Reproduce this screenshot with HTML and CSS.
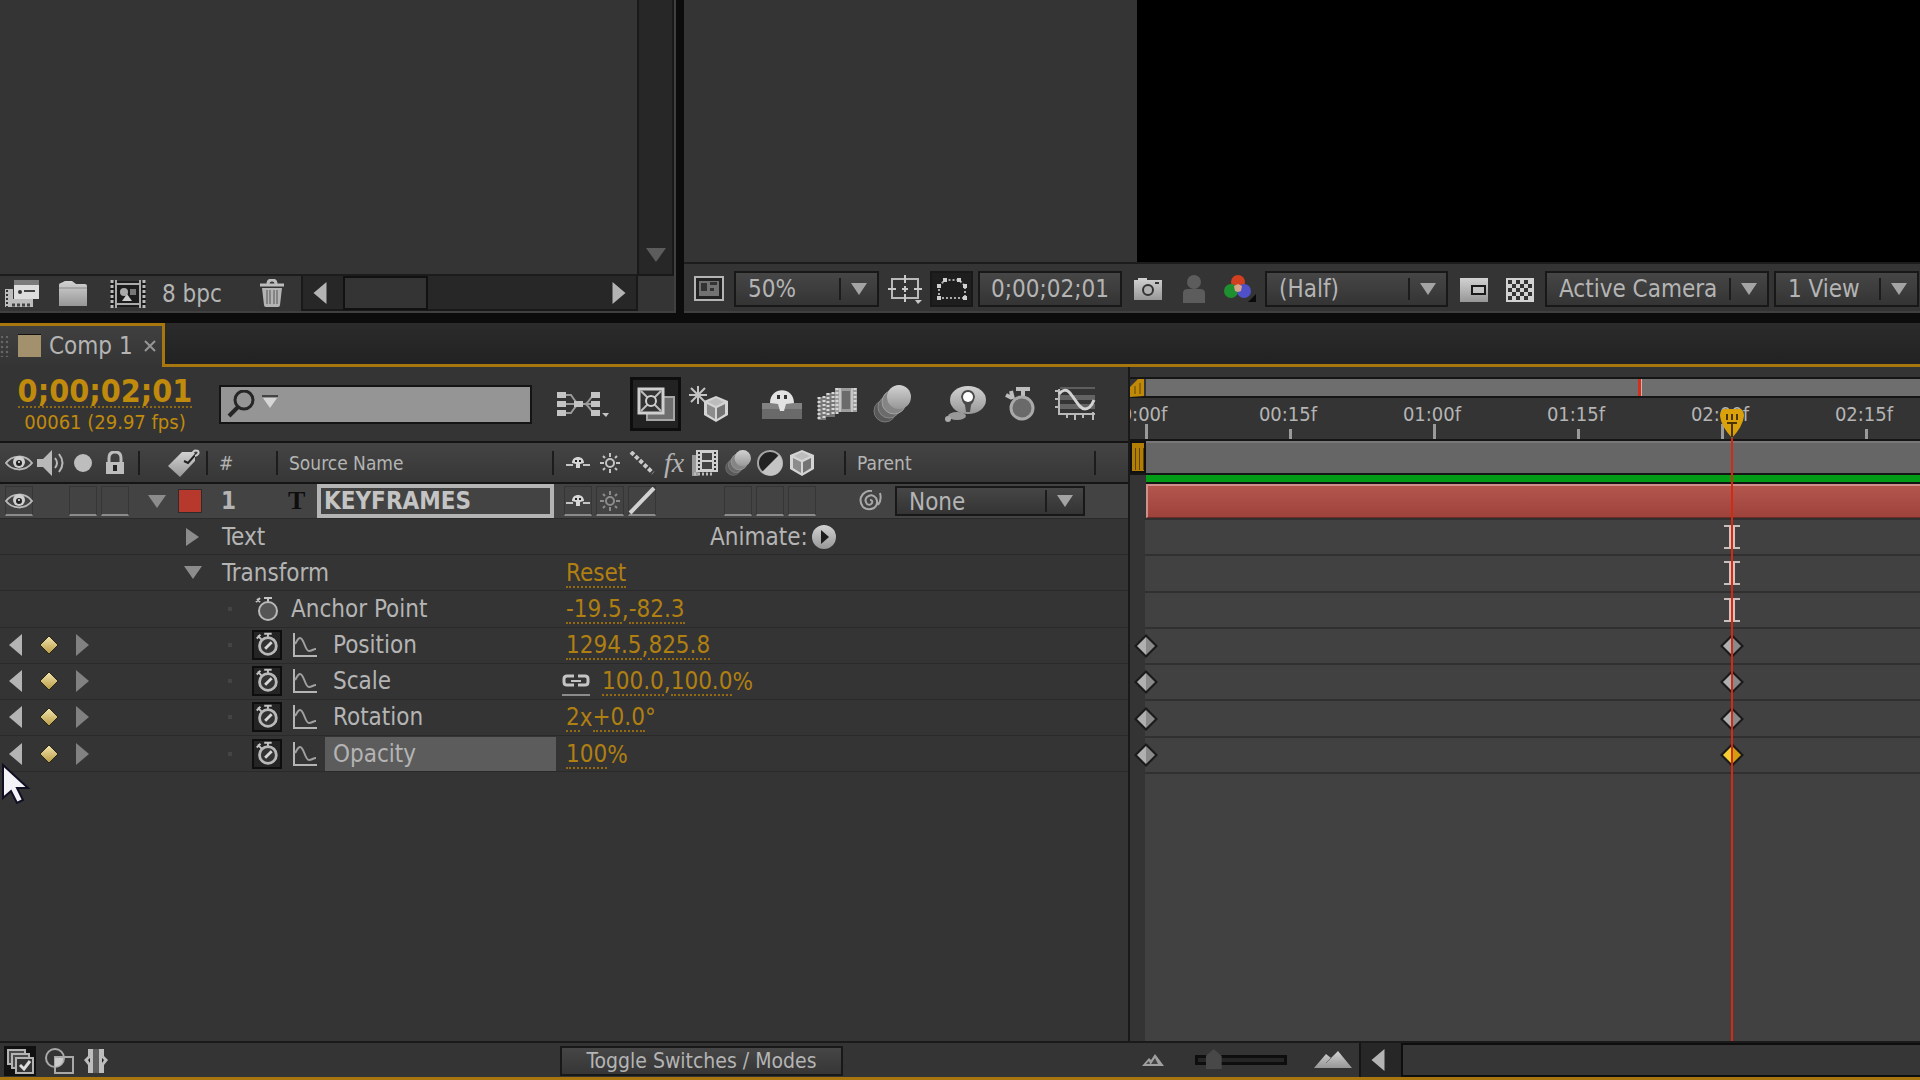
FILE: index.html
```html
<!DOCTYPE html>
<html lang="en">
<head>
  <meta charset="utf-8">
  <title>Comp 1</title>
  <link rel="stylesheet" href="styles.css">
</head>
<body>
  <!-- shared icons -->
  <svg class="sprite" aria-hidden="true">
    <defs>
      <linearGradient id="silver" x1="0" y1="0" x2="0" y2="1">
        <stop offset="0" stop-color="#d2d2d2"/><stop offset="1" stop-color="#979797"/>
      </linearGradient>
      <linearGradient id="gold" x1="0" y1="0" x2="0" y2="1">
        <stop offset="0" stop-color="#f3e6b0"/><stop offset="1" stop-color="#b89a42"/>
      </linearGradient>
    </defs>
    <symbol id="arrow-down" viewBox="0 0 16 12"><path d="M0 0h16L8 12z" fill="#a4a4a4"/></symbol>
    <symbol id="arrow-left" viewBox="0 0 13 22"><path d="M13 0v22L0 11z" fill="#b4b4b4"/></symbol>
    <symbol id="arrow-right" viewBox="0 0 13 22"><path d="M0 0v22l13-11z" fill="#b4b4b4"/></symbol>
    <symbol id="eye" viewBox="0 0 28 18">
      <path d="M1 9C7 1 20 0 27 9 20 18 7 17 1 9z" fill="none" stroke="#b9b9b9" stroke-width="2"/>
      <circle cx="14" cy="8" r="6" fill="#d0d0d0"/><circle cx="14" cy="9" r="3" fill="#222"/><circle cx="14" cy="8" r="1" fill="#eee"/>
    </symbol>
    <symbol id="shy" viewBox="0 0 24 14">
      <path d="M0 9h7M17 9h7" stroke="#c4c4c4" stroke-width="2"/>
      <path d="M6 7c0-8 12-8 12 0l-4 1v4h-4V8z" fill="#d6d6d6"/><path d="M9 4h2v2H9zM13 4h2v2h-2z" fill="#222"/>
    </symbol>
    <symbol id="sun" viewBox="0 0 20 20">
      <path d="M10 0v4M10 16v4M0 10h4M16 10h4M3 3l2 2M15 15l2 2M17 3l-2 2M5 15l-2 2" stroke="currentColor" stroke-width="2"/>
      <circle cx="10" cy="10" r="4" fill="none" stroke="currentColor" stroke-width="2"/>
    </symbol>
    <symbol id="cube" viewBox="0 0 24 26">
      <path d="M12 0l12 5v14l-12 7-12-7V5z" fill="#d4d4d4"/>
      <path d="M3 8l8 4v11l-8-5z" fill="#8c8c8c"/><path d="M21 8l-8 4v11l8-5z" fill="#737373"/><path d="M12 2l8 4-8 4-8-4z" fill="#bcbcbc"/>
    </symbol>
    <symbol id="blur" viewBox="0 0 38 38">
      <circle cx="12" cy="26" r="11" fill="#585858" stroke="#797979"/><circle cx="16" cy="22" r="11" fill="#6b6b6b" stroke="#898989"/>
      <circle cx="21" cy="17" r="12" fill="#858585" stroke="#a2a2a2"/><circle cx="26" cy="12" r="12" fill="url(#silver)"/>
    </symbol>
    <symbol id="stopwatch" viewBox="0 0 30 30">
      <path d="M12 4h8M16 4v4M5 5l3 3M4 8l4-4" stroke="#c4c4c4" stroke-width="2"/>
      <circle cx="16" cy="17" r="9" fill="#555" stroke="#b9b9b9" stroke-width="2"/>
    </symbol>
    <symbol id="stopwatch-on" viewBox="0 0 30 30">
      <path d="M12 3h8M16 3v4M5 5l4 4M4 8l4-4" stroke="#c4c4c4" stroke-width="2"/>
      <circle cx="16" cy="16" r="9" fill="#333" stroke="#b9b9b9" stroke-width="3"/>
      <path d="M13 19l7-7" stroke="#d8d8d8" stroke-width="3"/>
    </symbol>
    <symbol id="curve" viewBox="0 0 24 26">
      <path d="M1 1v23h23" fill="none" stroke="#b4b4b4" stroke-width="2"/>
      <path d="M2 12c2-3 3-6 5-6 4 0 5 13 9 13 3 0 4-2 7-2" fill="none" stroke="#a0a0a0" stroke-width="2"/>
    </symbol>
    <symbol id="diamond" viewBox="0 0 20 20"><path d="M10 1l9 9-9 9-9-9z" fill="url(#gold)" stroke="#29261a" stroke-width="1"/></symbol>
    <symbol id="keyframe" viewBox="0 0 24 24">
      <path d="M12 0l12 12-12 12L0 12z" fill="#1a1a1a"/><path d="M12 3v18l-9-9z" fill="#b0b0b0"/><path d="M12 3v18l9-9z" fill="#8a8a8a"/>
    </symbol>
    <symbol id="keyframe-on" viewBox="0 0 24 24">
      <path d="M12 0l12 12-12 12L0 12z" fill="#1a1a1a"/><path d="M12 3v18l-9-9z" fill="#f6cf35"/><path d="M12 3v18l9-9z" fill="#d59c12"/>
    </symbol>
    <symbol id="ibeam" viewBox="0 0 16 24"><path d="M0 1h16M0 23h16" stroke="#c9c0be" stroke-width="2"/><path d="M8 1v22" stroke="#d8c0bc" stroke-width="6"/></symbol>
    <symbol id="film" viewBox="0 0 26 26">
      <path d="M0 5h6v21H0z" fill="#9a9a9a"/><path d="M4 0h22v22H4z" fill="#cfcfcf"/><path d="M10 3h10v7H10zM10 12h10v7H10z" fill="#444"/>
      <path d="M7 2v19M23 2v19" stroke="#333" stroke-width="2" stroke-dasharray="2 2"/><path d="M2 24h18" stroke="#bbb" stroke-width="3" stroke-dasharray="2 2"/>
    </symbol>
  </svg>

  <div class="app">
    <div class="top">
      <section class="project">
        <div class="project-body">
          <div class="project-list"></div>
          <div class="v-scroll"><svg width="20" height="14"><path d="M0 0h20l-10 14z" fill="#5c5c5c"/></svg></div>
        </div>
        <div class="project-bar">
          <button class="icon-btn" aria-label="Interpret footage">
            <svg width="36" height="28"><path d="M1 9h8v18H1zM9 19h20v8H9z" fill="#bdbdbd"/><path d="M3 10v17" stroke="#333" stroke-width="2" stroke-dasharray="2 2"/><path d="M8 25h20" stroke="#444" stroke-width="3" stroke-dasharray="3 2"/><path d="M10 0h25v19H10z" fill="#7c7c7c"/><path d="M10 5h25v14H10z" fill="#dedede"/><circle cx="16" cy="12" r="2" fill="#333"/><path d="M20 11h11" stroke="#444" stroke-width="2"/></svg>
          </button>
          <button class="icon-btn" aria-label="New folder">
            <svg width="30" height="26"><path d="M1 4q0-2 2-2l4-2h7l4 3h9q2 0 2 2v20H1z" fill="url(#silver)"/><path d="M1 7h28" stroke="#8a8a8a"/></svg>
          </button>
          <button class="icon-btn" aria-label="New composition">
            <svg width="36" height="28"><path d="M0 1h36v26H0z" fill="#1c1c1c"/><path d="M2 0v28M34 0v28" stroke="#bbb" stroke-width="3" stroke-dasharray="3 2"/><path d="M6 0v28M30 0v28M6 4h24M6 24h24" stroke="#aaa" stroke-width="2"/><circle cx="14" cy="12" r="4" fill="#aaa"/><path d="M20 9h6v6h-6z" fill="#777"/><path d="M17 14l5 7H12z" fill="#ccc"/></svg>
          </button>
          <button class="depth">8 bpc</button>
          <button class="icon-btn" aria-label="Delete">
            <svg width="26" height="29"><path d="M1 6h24M9 5q0-4 4-4t4 4" fill="none" stroke="#bdbdbd" stroke-width="3"/><path d="M3 9h20l-2 17q0 2-2 2H7q-2 0-2-2z" fill="#b4b4b4"/><path d="M8 11v14M11 11v14M15 11v14M18 11v14" stroke="#555" stroke-width="1"/></svg>
          </button>
          <div class="h-scroll">
            <button aria-label="Scroll left"><svg width="14" height="22"><use href="#arrow-left"/></svg></button>
            <div class="h-thumb"></div>
            <button class="scroll-end" aria-label="Scroll right"><svg width="14" height="22"><use href="#arrow-right"/></svg></button>
          </div>
        </div>
      </section>

      <section class="viewer">
        <div class="stage"><div class="canvas"></div></div>
        <div class="viewer-bar">
          <button class="cell" aria-label="Always preview"><svg width="32" height="28"><path d="M2 2h28v23H2z" fill="#222" stroke="#b4b4b4" stroke-width="2"/><path d="M6 6h20v15H6z" fill="#727272"/><path d="M8 8h6v8H8zM17 7h7v3h-7zM17 13h4v3h-4z" fill="#333"/></svg></button>
          <div class="drop w145">
            <select aria-label="Magnification"><option>50%</option></select>
            <svg width="16" height="12"><use href="#arrow-down"/></svg>
          </div>
          <button class="cell" aria-label="Guides"><svg width="34" height="30"><path d="M4 5h26v19H4z" fill="none" stroke="#b9b9b9" stroke-width="2"/><path d="M17 1v8M17 20v8M0 15h8M26 15h8M14 15h6M17 12v6" stroke="#c9c9c9" stroke-width="2"/><path d="M27 26h7l-4 4z" fill="#c9c9c9"/></svg></button>
          <button class="mask" aria-label="Mask visibility"><svg width="32" height="24"><path d="M3 9L9 3h14l6 6v12H3z" fill="none" stroke="#aaa" stroke-width="2" stroke-dasharray="2 2"/><path d="M7 1h4v4H7zM1 7h4v4H1zM1 19h4v4H1zM21 1h4v4h-4zM27 7h4v4h-4zM27 19h4v4h-4z" fill="#d0d0d0"/></svg></button>
          <button class="time-box">0;00;02;01</button>
          <button class="cell" aria-label="Snapshot"><svg width="30" height="24"><path d="M1 3h4V1h9v2h15v20H1z" fill="url(#silver)"/><circle cx="15" cy="13" r="5" fill="#b0b0b0" stroke="#333" stroke-width="2"/><path d="M22 6h4" stroke="#333" stroke-width="2"/></svg></button>
          <button class="cell" aria-label="Show snapshot"><svg width="24" height="28"><circle cx="12" cy="7" r="7" fill="#5c5c5c"/><path d="M1 28V18q0-4 5-4h12q5 0 5 4v10z" fill="#5c5c5c"/></svg></button>
          <button class="cell" aria-label="Channels"><svg width="34" height="30"><circle cx="15" cy="8" r="7" fill="#d2401f"/><circle cx="8" cy="17" r="7" fill="#1f9030"/><circle cx="21" cy="17" r="7" fill="#5050c8"/><path d="M11 12l4-2 4 2-1 5-3 1-3-1z" fill="#d9a58a"/><path d="M25 28l8-8v8z" fill="#0a0a0a"/></svg></button>
          <div class="drop w182">
            <select aria-label="Resolution"><option>(Half)</option></select>
            <svg width="16" height="12"><use href="#arrow-down"/></svg>
          </div>
          <button class="cell" aria-label="Region of interest"><svg width="28" height="26"><path d="M0 2h28v24H0z" fill="url(#silver)"/><path d="M12 10h13v8H12z" fill="#c4c4c4" stroke="#1a1a1a" stroke-width="2"/></svg></button>
          <button class="cell" aria-label="Transparency grid"><svg width="28" height="26"><path d="M0 2h28v24H0z" fill="#d2d2d2"/><path d="M2 6h24M2 14h24M2 22h24" stroke="#333" stroke-width="4" stroke-dasharray="4 4"/><path d="M6 10h20M6 18h20" stroke="#333" stroke-width="4" stroke-dasharray="4 4"/></svg></button>
          <div class="drop w223">
            <select aria-label="3D view"><option>Active Camera</option></select>
            <svg width="16" height="12"><use href="#arrow-down"/></svg>
          </div>
          <div class="drop w145">
            <select aria-label="View layout"><option>1 View</option></select>
            <svg width="16" height="12"><use href="#arrow-down"/></svg>
          </div>
        </div>
      </section>
    </div>

    <section class="timeline">
      <div class="tabs">
        <div class="tab">
          <span class="grip"></span>
          <span class="tab-swatch"></span>
          <span>Comp 1</span>
          <button class="close" aria-label="Close"><svg width="12" height="12"><path d="M1 1l10 10M11 1L1 11" stroke="#969696" stroke-width="2"/></svg></button>
        </div>
        <div class="tab-rest"></div>
      </div>

      <div class="panes">
        <div class="left">
          <div class="tools">
            <div class="clock">
              <button class="big-time">0;00;02;01</button>
              <span class="frames">00061 (29.97 fps)</span>
            </div>
            <div class="search">
              <input type="text" aria-label="Search layers">
              <svg width="52" height="28"><circle cx="17" cy="10" r="9" fill="none" stroke="#262626" stroke-width="3"/><path d="M11 17L2 26" stroke="#262626" stroke-width="4"/><path d="M35 6h16" stroke="#444" stroke-width="2"/><path d="M36 8h14l-7 10z" fill="#d6d6d6"/></svg>
            </div>
            <div class="tool-group">
              <button class="flow" aria-label="Composition mini-flowchart"><svg width="54" height="28"><path d="M9 5h6q6 9 8 9h6q2 0 8-9h6M9 14h35M9 23h6q6-9 8-9h6q2 0 8 9h6" fill="none" stroke="#9a9a9a" stroke-width="2"/><path d="M1 2h9v6H1zM1 11h9v6H1zM1 20h9v6H1zM18 11h9v6h-9zM35 2h9v6h-9zM35 11h9v6h-9zM35 20h9v6h-9z" fill="#c4c4c4"/><path d="M46 23h7l-3 4z" fill="#c4c4c4"/></svg></button>
              <button class="boxed" aria-label="Live update"><svg width="38" height="34"><path d="M10 10h27v23H10z" fill="#6e6e6e" stroke="#a6a6a6" stroke-width="2"/><path d="M2 2h24v24H2z" fill="#333" stroke="#cfcfcf" stroke-width="3"/><path d="M4 4l20 20M24 4L4 24" stroke="#bdbdbd" stroke-width="2"/><circle cx="14" cy="14" r="5" fill="#333" stroke="#cfcfcf" stroke-width="2"/></svg></button>
              <button class="tool" aria-label="Draft 3D"><svg width="40" height="36"><path d="M9 0v18M0 9h18M2 2l14 14M16 2L2 16" stroke="#c4c4c4" stroke-width="2"/><svg x="15" y="10" width="24" height="26"><use href="#cube"/></svg></svg></button>
            </div>
            <div class="tool-group">
              <button class="tool" aria-label="Hide shy layers"><svg width="40" height="30"><path d="M0 14h40v16H0z" fill="#828282"/><path d="M0 20h40v10H0z" fill="#6a6a6a"/><path d="M8 14c0-17 24-17 24 0l-8 1-2 7h-4l-2-7z" fill="#e2e2e2"/><path d="M15 6h3v4h-3zM22 6h3v4h-3z" fill="#333"/></svg></button>
              <button class="tool" aria-label="Frame blending"><svg width="40" height="34"><path d="M1 10h8v23H1zM9 6h9v24H9z" fill="#777"/><path d="M18 1h22v24H18z" fill="#9d9d9d"/><path d="M25 4h8v18h-8z" fill="#6b6b6b"/><path d="M2 10v23M7 9v22M11 6v24M16 5v23M20 1v28M38 1v24" stroke="#d6d6d6" stroke-width="3" stroke-dasharray="2 2"/><path d="M23 1v24M35 1v24" stroke="#c4c4c4" stroke-width="2"/></svg></button>
              <button class="tool" aria-label="Motion blur"><svg width="38" height="38"><use href="#blur"/></svg></button>
            </div>
            <div class="tool-group">
              <button class="tool" aria-label="Brainstorm"><svg width="42" height="38"><ellipse cx="24" cy="15" rx="18" ry="14" fill="url(#silver)"/><ellipse cx="13" cy="31" rx="9" ry="4" fill="#999"/><circle cx="4" cy="34" r="3" fill="#aaa"/><path d="M17 12q1-7 7-7t7 7q-1 5-4 8l-1 7h-4l-1-7q-3-3-4-8z" fill="#4a4a4a"/><circle cx="24" cy="12" r="5" fill="#fff"/></svg></button>
              <button class="tool" aria-label="Auto-keyframe"><svg width="32" height="34"><path d="M12 2h14M19 2v8M2 8l6 3M7 4l2 8" stroke="#bdbdbd" stroke-width="4"/><circle cx="18" cy="21" r="11" fill="#6a6a6a" stroke="#a9a9a9" stroke-width="3"/></svg></button>
              <button class="tool" aria-label="Graph editor"><svg width="42" height="34"><path d="M6 1h35" stroke="#888"/><path d="M6 8h35v5H6zM6 17h35v5H6z" fill="#636363"/><path d="M5 2v25h36M1 4h4M1 12h4M1 20h4M13 27v4M21 27v6M29 27v4M39 25v8" fill="none" stroke="#b9b9b9" stroke-width="2"/><path d="M5 7c3-4 7-5 10-2 6 6 10 17 16 17 4 0 7-4 9-9" fill="none" stroke="#d2d2d2" stroke-width="3"/></svg></button>
            </div>
          </div>

          <div class="columns cols">
            <div class="av col">
              <svg class="slot" viewBox="0 0 28 18" height="18"><use href="#eye"/></svg>
              <svg class="slot" viewBox="0 0 28 26" height="26"><path d="M0 9h6l9-9v26l-9-9H0z" fill="#b9b9b9"/><path d="M18 8q4 5 0 10M22 4q7 9 0 18" fill="none" stroke="#b9b9b9" stroke-width="2"/></svg>
              <svg class="slot" viewBox="0 0 28 18" height="18"><circle cx="14" cy="9" r="9" fill="#bdbdbd"/></svg>
              <svg class="slot" viewBox="0 0 28 24" height="24"><path d="M8 12V7q0-6 6-6t6 6v5" fill="none" stroke="#bdbdbd" stroke-width="3"/><path d="M5 11h18v12H5z" fill="#bdbdbd"/><path d="M12 14h4v6h-4z" fill="#222"/></svg>
            </div>
            <div class="col label-col"><svg width="32" height="28"><path d="M0 17L14 3h10q3 0 3 3v6L12 28z" fill="url(#silver)"/><path d="M16 12l4 2 8-9" fill="none" stroke="#222" stroke-width="2"/><path d="M24 5q2-5 6-3 2 3-3 5" fill="none" stroke="#ccc" stroke-width="2"/></svg></div>
            <div class="col num-col">#</div>
            <div class="col name-col">Source Name</div>
            <div class="col switches">
              <svg class="slot" viewBox="0 0 28 20" height="20"><svg x="2" y="3" width="24" height="14"><use href="#shy"/></svg></svg>
              <svg class="slot bright" viewBox="0 0 28 20" height="20"><svg x="4" width="20" height="20"><use href="#sun"/></svg></svg>
              <svg class="slot" viewBox="0 0 28 24" height="24"><path d="M3 1l22 21" stroke="#c9c9c9" stroke-width="4" stroke-dasharray="4 2"/></svg>
              <span class="slot fx">fx</span>
              <svg class="slot" viewBox="0 0 28 26" height="26"><svg x="0" width="26" height="26"><use href="#film"/></svg></svg>
              <svg class="slot" viewBox="0 0 28 26" height="26"><svg x="0" width="28" height="26"><use href="#blur"/></svg></svg>
              <svg class="slot" viewBox="0 0 28 26" height="26"><circle cx="14" cy="13" r="12" fill="#222" stroke="#a6a6a6" stroke-width="2"/><path d="M23 5A12 12 0 0 1 6 22z" fill="#c4c4c4"/></svg>
              <svg class="slot" viewBox="0 0 28 26" height="26"><svg x="1" width="26" height="26"><use href="#cube"/></svg></svg>
            </div>
            <div class="col parent-col">Parent</div>
            <div></div>
          </div>

          <div class="layer cols">
            <div class="av">
              <button class="slot box" aria-label="Video"><svg width="28" height="18"><use href="#eye"/></svg></button>
              <span class="slot"></span>
              <button class="slot box" aria-label="Solo"></button>
              <button class="slot box" aria-label="Lock"></button>
            </div>
            <div class="label-cell">
              <button class="twirl" aria-label="Collapse layer"><svg width="18" height="13"><path d="M0 0h18L9 13z" fill="#8c8c8c"/></svg></button>
              <button class="swatch" aria-label="Label colour"></button>
            </div>
            <div class="number">1</div>
            <div class="name-cell"><span class="t-icon">T</span><input class="layer-name" type="text" value="KEYFRAMES" aria-label="Layer name"></div>
            <div class="switches">
              <button class="slot box" aria-label="Shy"><svg width="24" height="14"><use href="#shy"/></svg></button>
              <button class="slot box dim" aria-label="Collapse"><svg width="20" height="20"><use href="#sun"/></svg></button>
              <button class="slot box" aria-label="Quality"><svg width="28" height="28"><path d="M2 26L26 1" stroke="#d2d2d2" stroke-width="4"/></svg></button>
              <span class="slot"></span>
              <span class="slot"></span>
              <button class="slot box" aria-label="Motion blur"></button>
              <button class="slot box" aria-label="Adjustment"></button>
              <button class="slot box" aria-label="3D layer"></button>
            </div>
            <div class="parent">
              <svg width="24" height="22"><path d="M12 10q3 0 2 3-2 3-5 1-3-4 0-7 5-4 9 1 3 6-2 10-6 3-11-1-5-7 0-13 4-4 9-3M22 3q2 7-2 12" fill="none" stroke="#a9a9a9" stroke-width="2"/></svg>
              <div class="drop">
                <select aria-label="Parent layer"><option>None</option></select>
                <svg width="16" height="12"><use href="#arrow-down"/></svg>
              </div>
            </div>
            <div></div>
          </div>

          <div class="rows">
            <div class="row">
              <div class="keys"></div>
              <div class="prop group"><button class="twirl" aria-label="Expand Text"><svg width="14" height="18"><path d="M0 0v18l13-9z" fill="#8c8c8c"/></svg></button><span>Text</span></div>
              <div class="animate">Animate:<button aria-label="Animate menu"><svg width="24" height="24"><circle cx="12" cy="12" r="12" fill="url(#silver)"/><path d="M9 5v14l8-7z" fill="#1c1c1c"/></svg></button></div>
            </div>
            <div class="row">
              <div class="keys"></div>
              <div class="prop group"><button class="twirl" aria-label="Collapse Transform"><svg width="18" height="13"><path d="M0 0h18L9 13z" fill="#8c8c8c"/></svg></button><span>Transform</span></div>
              <div class="value"><button class="num">Reset</button></div>
            </div>
            <div class="row">
              <div class="keys"></div>
              <div class="prop"><span class="dot"></span><button class="watch off" aria-label="Animate Anchor Point"><svg width="30" height="30"><use href="#stopwatch"/></svg></button><span class="prop-name near">Anchor Point</span></div>
              <div class="value"><button class="num">-19.5</button>,<button class="num">-82.3</button></div>
            </div>
            <div class="row">
              <div class="keys"><button aria-label="Previous keyframe"><svg width="13" height="22"><use href="#arrow-left"/></svg></button><button aria-label="Toggle keyframe"><svg width="20" height="20"><use href="#diamond"/></svg></button><button class="faint" aria-label="Next keyframe"><svg width="13" height="22"><use href="#arrow-right"/></svg></button></div>
              <div class="prop"><span class="dot"></span><button class="watch" aria-label="Animate Position"><svg width="28" height="28"><use href="#stopwatch-on"/></svg></button><svg class="curve" width="24" height="26"><use href="#curve"/></svg><span class="prop-name">Position</span></div>
              <div class="value"><button class="num">1294.5</button>,<button class="num">825.8</button></div>
            </div>
            <div class="row">
              <div class="keys"><button aria-label="Previous keyframe"><svg width="13" height="22"><use href="#arrow-left"/></svg></button><button aria-label="Toggle keyframe"><svg width="20" height="20"><use href="#diamond"/></svg></button><button class="faint" aria-label="Next keyframe"><svg width="13" height="22"><use href="#arrow-right"/></svg></button></div>
              <div class="prop"><span class="dot"></span><button class="watch" aria-label="Animate Scale"><svg width="28" height="28"><use href="#stopwatch-on"/></svg></button><svg class="curve" width="24" height="26"><use href="#curve"/></svg><span class="prop-name">Scale</span></div>
              <div class="value"><button class="link" aria-label="Constrain proportions"><svg width="28" height="14"><path d="M12 2H5Q2 2 2 5v3q0 3 3 3h7M16 2h7q3 0 3 3v3q0 3-3 3h-7" fill="none" stroke="#c4c4c4" stroke-width="3"/><path d="M9 7h10" stroke="#c4c4c4" stroke-width="2"/></svg></button><button class="num">100.0</button>,<button class="num">100.0</button>%</div>
            </div>
            <div class="row">
              <div class="keys"><button aria-label="Previous keyframe"><svg width="13" height="22"><use href="#arrow-left"/></svg></button><button aria-label="Toggle keyframe"><svg width="20" height="20"><use href="#diamond"/></svg></button><button class="faint" aria-label="Next keyframe"><svg width="13" height="22"><use href="#arrow-right"/></svg></button></div>
              <div class="prop"><span class="dot"></span><button class="watch" aria-label="Animate Rotation"><svg width="28" height="28"><use href="#stopwatch-on"/></svg></button><svg class="curve" width="24" height="26"><use href="#curve"/></svg><span class="prop-name">Rotation</span></div>
              <div class="value"><button class="num">2</button>x<button class="num">+0.0</button>°</div>
            </div>
            <div class="row">
              <div class="keys"><button aria-label="Previous keyframe"><svg width="13" height="22"><use href="#arrow-left"/></svg></button><button aria-label="Toggle keyframe"><svg width="20" height="20"><use href="#diamond"/></svg></button><button class="faint" aria-label="Next keyframe"><svg width="13" height="22"><use href="#arrow-right"/></svg></button></div>
              <div class="prop"><span class="dot"></span><button class="watch" aria-label="Animate Opacity"><svg width="28" height="28"><use href="#stopwatch-on"/></svg></button><svg class="curve" width="24" height="26"><use href="#curve"/></svg><span class="prop-name selected">Opacity</span></div>
              <div class="value"><button class="num">100</button>%</div>
            </div>
          </div>
        </div>

        <div class="right">
          <div class="navigator"><span class="nav-end"><svg width="16" height="18"><path d="M0 18V8l8-8h6v17z" fill="#c08a08"/><path d="M5 7v8M10 4v11" stroke="#5f4400" stroke-width="1"/></svg></span><div class="nav-bar"></div><span class="nav-mark"></span></div>
          <div class="ruler">
            <div class="tick major">0:00f</div>
            <div class="tick">00:15f</div>
            <div class="tick major">01:00f</div>
            <div class="tick">01:15f</div>
            <div class="tick major">02:00f</div>
            <div class="tick">02:15f</div>
          </div>
          <div class="work-area"><span class="work-end"></span><div class="work-bar"></div></div>
          <div class="cached"></div>
          <div class="clip-row"><div class="clip"></div></div>
          <div class="rows tracks">
            <div class="track"><svg class="key end beam"><use href="#ibeam"/></svg></div>
            <div class="track"><svg class="key end beam"><use href="#ibeam"/></svg></div>
            <div class="track"><svg class="key end beam"><use href="#ibeam"/></svg></div>
            <div class="track"><svg class="key start"><use href="#keyframe"/></svg><svg class="key end"><use href="#keyframe"/></svg></div>
            <div class="track"><svg class="key start"><use href="#keyframe"/></svg><svg class="key end"><use href="#keyframe"/></svg></div>
            <div class="track"><svg class="key start"><use href="#keyframe"/></svg><svg class="key end"><use href="#keyframe"/></svg></div>
            <div class="track"><svg class="key start"><use href="#keyframe"/></svg><svg class="key end"><use href="#keyframe-on"/></svg></div>
          </div>
          <div class="empty"></div>
          <div class="playhead">
            <svg width="24" height="30"><path d="M3 1h18q3 2 3 7-1 10-12 22Q1 18 0 8q0-5 3-7z" fill="#dba10b"/><path d="M7 6v6M12 6v6M17 6v6M7 15h10M12 15v14" stroke="#4a3500" stroke-width="2"/></svg>
            <div class="playline"></div>
          </div>
        </div>
      </div>

      <div class="footer">
        <div class="foot-left">
          <div class="foot-icons">
            <button class="foot-on" aria-label="Switches pane"><svg width="28" height="26"><path d="M2 2h17v14H2z" fill="#4a4a4a" stroke="#b4b4b4" stroke-width="2"/><path d="M6 6h17v14H6z" fill="#4a4a4a" stroke="#b4b4b4" stroke-width="2"/><path d="M10 10h17v15H10z" fill="#333" stroke="#b4b4b4" stroke-width="2"/><path d="M14 17l4 4 6-8" fill="none" stroke="#ddd" stroke-width="3"/></svg></button>
            <button aria-label="Modes pane"><svg width="30" height="27"><circle cx="10" cy="10" r="9" fill="none" stroke="#a9a9a9" stroke-width="2"/><path d="M10 9h18v16H10z" fill="none" stroke="#a9a9a9" stroke-width="2"/><path d="M10 10h8q1 7-8 9z" fill="#ccc"/></svg></button>
            <button aria-label="In and out pane"><svg width="24" height="26"><path d="M9 1h6v24H9z" fill="#5e5e5e"/><path d="M4 1h5v24H4v-8l-4-5 4-4zM20 1h-5v24h5v-8l4-5-4-4z" fill="#bdbdbd"/><path d="M6 10l-2 2 2 3zM18 10l2 2-2 3z" fill="#222"/></svg></button>
          </div>
          <button class="toggle">Toggle Switches / Modes</button>
        </div>
        <div class="foot-right">
          <svg width="26" height="12"><path d="M0 12l7-8 2 2 4-6 9 12z" fill="#a0a0a0"/><path d="M9 10l4-6 3 6zM4 10l3-3 1 3z" fill="#444"/></svg>
          <input class="zoom" type="range" min="0" max="100" value="11" aria-label="Timeline zoom">
          <svg width="38" height="18"><path d="M0 17L12 3l5 4 7-7 14 17z" fill="url(#silver)"/><path d="M12 12l8-8" stroke="#777"/></svg>
          <div class="foot-scroll"><button aria-label="Scroll left"><svg width="14" height="22"><use href="#arrow-left"/></svg></button><div class="foot-thumb"></div></div>
        </div>
      </div>
    </section>

    <svg class="cursor" width="30" height="44"><path d="M2 2v33l8-7 6 12 6-3-6-12h11z" fill="#f4f4f8" stroke="#101024" stroke-width="2"/></svg>
  </div>
</body>
</html>
```
FILE: styles.css
```css
* {
  box-sizing: border-box;
}

body {
  margin: 0;
  background: #0c0c0c;
  color: #b4b4b4;
  font-family: "DejaVu Sans Condensed", "Noto Sans", sans-serif;
  font-size: 24px;
  line-height: 28px;
}

button,
input,
select {
  font: inherit;
  color: inherit;
  border: 0;
  padding: 0;
  margin: 0;
  background: none;
  border-radius: 0;
}

svg {
  display: block;
  flex: none;
}

.sprite {
  position: absolute;
  width: 0;
  height: 0;
}

.app {
  position: relative;
  display: flex;
  flex-direction: column;
  gap: 10px;
  height: 100vh;
  overflow: hidden;
}

/* top panels */
.top {
  display: grid;
  grid-template-columns: 676px 1fr;
  gap: 8px;
  height: 313px;
  flex: none;
}

.project,
.viewer {
  display: flex;
  flex-direction: column;
  min-width: 0;
  background: #343434;
  border-bottom: 2px solid #404040;
}

.project {
  border-right: 2px solid #404040;
}

.project-body {
  flex: 1;
  display: flex;
}

.project-list {
  flex: 1;
  border-bottom: 2px solid #1c1c1c;
}

.v-scroll {
  display: flex;
  align-items: flex-end;
  justify-content: center;
  width: 37px;
  padding-bottom: 12px;
  background: #272727;
  border: 2px solid #191919;
  border-top: 0;
}

.project-bar {
  display: flex;
  align-items: center;
  height: 35px;
  margin-right: 36px;
}

.icon-btn {
  display: flex;
  justify-content: center;
  width: 52px;
}

.icon-btn:first-child {
  width: 44px;
}

.project-bar .icon-btn:nth-child(2) {
  width: 58px;
}

.depth {
  width: 92px;
  padding-left: 8px;
  text-align: left;
}

.h-scroll {
  flex: 1;
  display: flex;
  align-items: center;
  height: 35px;
  margin-left: 3px;
  padding-left: 10px;
  background: #272727;
  border: 2px solid #191919;
  border-top: 0;
}

.h-thumb {
  width: 85px;
  height: 34px;
  margin-left: 16px;
  background: #343434;
  border: 2px solid #111;
}

.scroll-end {
  margin-left: auto;
  padding-right: 10px;
}

.stage {
  flex: 1;
  display: flex;
  border-bottom: 2px solid #1c1c1c;
}

.canvas {
  flex: 1;
  margin-left: 453px;
  background: #000;
}

.viewer-bar {
  display: flex;
  align-items: center;
  gap: 5px;
  height: 47px;
  padding: 2px 0 0 4px;
}

.cell {
  display: flex;
  justify-content: center;
  flex: none;
  width: 41px;
}

.mask,
.time-box,
.drop {
  flex: none;
  height: 36px;
  border: 2px solid #181818;
  background: linear-gradient(#464646, #343434);
}

.mask {
  display: flex;
  align-items: center;
  justify-content: center;
  width: 43px;
  background: #1e1e1e;
}

.time-box {
  width: 144px;
}

.drop {
  display: grid;
  grid-template-columns: 1fr 38px;
  align-items: center;
}

.drop select {
  grid-area: 1 / 1 / 2 / 3;
  width: 100%;
  height: 30px;
  padding-left: 12px;
  appearance: none;
  outline: 0;
}

.drop svg {
  grid-area: 1 / 2;
  justify-self: end;
  margin-right: 10px;
  pointer-events: none;
}

.drop::after {
  content: "";
  grid-area: 1 / 2;
  width: 2px;
  height: 22px;
  background: #1c1c1c;
}

.w145 {
  width: 145px;
}

.w182 {
  width: 183px;
}

.w223 {
  width: 224px;
}

/* timeline */
.timeline {
  flex: 1;
  display: flex;
  flex-direction: column;
  min-height: 0;
  background: #343434;
  border-bottom: 3px solid #a8760f;
}

.tabs {
  display: flex;
  height: 44px;
  flex: none;
}

.tab {
  display: flex;
  align-items: center;
  width: 165px;
  padding-bottom: 2px;
  background: linear-gradient(#404040, #343434);
  border-top: 3px solid #a8760f;
  border-right: 3px solid #a8760f;
}

.tab-rest {
  flex: 1;
  background: linear-gradient(#2b2b2b, #222);
  border-bottom: 3px solid #a8760f;
}

.grip {
  width: 10px;
  height: 22px;
  margin-right: 8px;
  background: radial-gradient(circle at 2px 2px, #666 1px, #222 2px, transparent 2px) 0 0 / 5px 5px;
}

.tab-swatch {
  width: 23px;
  height: 23px;
  margin-right: 8px;
  background: #a3906c;
  border-top: 1px solid #111;
}

.close {
  margin-left: auto;
  padding-right: 6px;
}

.panes {
  flex: 1;
  display: grid;
  grid-template-columns: 1130px 1fr;
  min-height: 0;
}

.left {
  border-right: 2px solid #191919;
}

.tools {
  display: flex;
  align-items: center;
  height: 74px;
}

.clock {
  display: flex;
  flex-direction: column;
  align-items: center;
  width: 210px;
  padding-top: 4px;
  color: #c08a0c;
}

.big-time {
  font-size: 32px;
  font-weight: bold;
  line-height: 30px;
  border-bottom: 2px dotted #8f6812;
}

.frames {
  font-size: 20px;
  line-height: 28px;
}

.search {
  display: grid;
  align-items: center;
  width: 313px;
  height: 39px;
  margin: 0 24px 0 9px;
  background: #959595;
  border: 2px solid #141414;
}

.search input {
  grid-area: 1 / 1;
  width: 100%;
  height: 35px;
  padding-left: 62px;
  color: #1a1a1a;
}

.search svg {
  grid-area: 1 / 1;
  margin-left: 6px;
  pointer-events: none;
}

.tool-group {
  display: flex;
  align-items: center;
  margin-right: 18px;
}

.tool {
  display: flex;
  justify-content: center;
  width: 55px;
}

.flow {
  width: 74px;
}

.boxed {
  display: flex;
  align-items: center;
  justify-content: center;
  width: 51px;
  height: 54px;
  background: #222;
  border: 3px solid #0e0e0e;
}

.cols {
  display: grid;
  grid-template-columns: 140px 68px 70px 276px 292px 250px 1fr;
}

.columns {
  height: 43px;
  align-items: center;
  font-size: 19px;
  background: linear-gradient(#444, #373737);
  border-top: 2px solid #151515;
  border-bottom: 2px solid #151515;
}

.col {
  display: flex;
  align-items: center;
  height: 24px;
  border-right: 2px solid #1c1c1c;
}

.av,
.switches {
  display: flex;
  align-items: center;
  gap: 4px;
  padding-left: 5px;
}

.switches {
  padding-left: 10px;
}

.slot {
  display: block;
  flex: none;
  width: 28px;
}

.bright {
  color: #c4c4c4;
}

.dim {
  color: #8c8c8c;
}

.label-col {
  justify-content: flex-end;
  padding-right: 6px;
}

.num-col,
.name-col,
.parent-col {
  padding-left: 11px;
}

.fx {
  font-family: "Liberation Serif", serif;
  font-size: 28px;
  font-style: italic;
  text-align: center;
}

.layer {
  height: 34px;
  background: #434343;
}

.layer > div {
  display: flex;
  align-items: center;
}

.box {
  display: flex;
  align-items: center;
  justify-content: center;
  height: 30px;
  border: 1px solid #363636;
  border-bottom: 2px solid #8b8b8b;
}

.twirl {
  display: flex;
  justify-content: center;
  width: 34px;
}

.swatch {
  width: 24px;
  height: 24px;
  margin-left: 4px;
  background: #b7382c;
  border: 1px solid #2c2c2c;
}

.number {
  padding-left: 13px;
  font-weight: bold;
}

.t-icon {
  width: 39px;
  padding-left: 10px;
  color: #0e0e0e;
  font-family: "Liberation Serif", serif;
  font-size: 26px;
  font-weight: bold;
}

.layer-name {
  flex: 1;
  min-width: 0;
  height: 34px;
  padding-left: 3px;
  color: #c4c4c4;
  font-weight: bold;
  border: 4px solid #b4b4b4;
}

.parent {
  gap: 13px;
  padding-left: 12px;
}

.parent .drop {
  width: 190px;
  height: 30px;
}

.parent .drop select {
  height: 26px;
}

.rows {
  display: grid;
  grid-template-rows: repeat(7, 1fr);
  height: 254px;
}

.row {
  display: grid;
  grid-template-columns: 140px 416px 1fr;
  align-items: center;
  border-top: 1px solid #2a2a2a;
}

.row:last-child {
  border-bottom: 1px solid #2a2a2a;
}

.keys {
  display: flex;
  align-items: center;
  gap: 17px;
  padding-left: 9px;
}

.faint {
  opacity: 0.6;
}

.prop {
  display: flex;
  align-items: center;
  height: 35px;
}

.group {
  gap: 12px;
  padding-left: 36px;
}

.dot {
  width: 4px;
  height: 4px;
  margin: 0 20px 0 88px;
  background: #444;
}

.watch {
  display: flex;
  align-items: center;
  justify-content: center;
  width: 30px;
  height: 30px;
  background: #242424;
  border: 2px solid #0e0e0e;
}

.off {
  background: none;
  border-color: transparent;
}

.curve {
  margin: 0 8px 0 11px;
}

.prop-name {
  flex: 1;
  height: 34px;
  padding-left: 8px;
  line-height: 34px;
}

.near {
  padding-left: 9px;
}

.selected {
  background: #5c5c5c;
}

.value {
  display: flex;
  align-items: center;
  padding: 2px 0 0 10px;
  color: #b07f12;
}

.num {
  line-height: 26px;
  border-bottom: 2px dotted #94690f;
}

.link {
  margin-right: 12px;
  margin-left: -4px;
  padding: 6px 0;
  border-bottom: 2px solid #8b8b8b;
}

.animate {
  display: flex;
  align-items: center;
  gap: 4px;
  padding-left: 154px;
}

/* time graph side */
.right {
  position: relative;
  display: flex;
  flex-direction: column;
  min-width: 0;
  overflow: hidden;
  padding-top: 10px;
}

.navigator,
.work-area {
  position: relative;
  display: flex;
  flex: none;
  border-top: 2px solid #151515;
  border-bottom: 2px solid #151515;
}

.navigator {
  height: 21px;
}

.nav-end,
.work-end {
  width: 16px;
}

.nav-bar {
  flex: 1;
  background: #6e6e6e;
}

.nav-mark {
  position: absolute;
  left: 508px;
  width: 4px;
  height: 17px;
  background: #d42e1c;
  border-right: 1px solid #c9b5b2;
}

.ruler {
  display: flex;
  height: 41px;
  flex: none;
  margin-left: -56px;
  font-size: 20px;
  line-height: 32px;
  text-indent: -4px;
}

.tick {
  display: flex;
  flex-direction: column;
  align-items: center;
  flex: none;
  width: 144px;
  height: 41px;
}

.tick::after {
  content: "";
  width: 3px;
  height: 10px;
  margin-top: -1px;
  background: #9a9a9a;
}

.major::after {
  height: 15px;
  margin-top: -6px;
}

.work-area {
  height: 36px;
}

.work-bar {
  flex: 1;
  background: #666;
  border-top: 2px solid #787878;
}

.work-end {
  background: repeating-linear-gradient(90deg, transparent 0 3px, #5f4400 3px 4px) 0 5px / 13px 22px no-repeat, #b27f06;
  border: 2px solid #111;
}

.cached {
  height: 9px;
  flex: none;
  margin-left: 16px;
  background: #039c16;
  border-bottom: 2px solid #151515;
}

.clip-row {
  height: 34px;
  flex: none;
  padding-left: 16px;
}

.clip {
  height: 34px;
  background: linear-gradient(#b2564e, #9e433b);
  border-top: 2px solid #cf8f8a;
  border-left: 2px solid #cf8f8a;
  border-bottom: 1px solid #6d2c26;
}

.tracks {
  flex: none;
}

.track {
  position: relative;
  margin-left: 15px;
  background: #414141;
  border-top: 2px solid #303030;
}

.key {
  position: absolute;
  top: 50%;
  width: 24px;
  height: 24px;
  transform: translate(-50%, -50%);
}

.beam {
  width: 16px;
}

.start {
  left: 1px;
}

.end {
  left: 587px;
}

.empty {
  flex: 1;
  margin-left: 15px;
  background: #414141;
  border-top: 2px solid #303030;
}

.playhead {
  position: absolute;
  top: 41px;
  bottom: 0;
  left: 590px;
  display: flex;
  flex-direction: column;
  align-items: center;
}

.playline {
  flex: 1;
  width: 2px;
  background: #d42a12;
}

/* footer */
.footer {
  display: grid;
  grid-template-columns: 1130px 1fr;
  height: 36px;
  flex: none;
  border-top: 2px solid #1a1a1a;
}

.foot-left {
  display: grid;
  grid-template-columns: 555px 1fr;
  align-items: center;
  padding-top: 2px;
}

.foot-icons {
  display: flex;
  align-items: center;
  gap: 9px;
  padding-left: 4px;
}

.foot-on {
  padding: 2px;
  background: #111;
}

.toggle {
  width: 283px;
  height: 30px;
  margin-left: 5px;
  font-size: 21px;
  line-height: 26px;
  background: linear-gradient(#464646, #363636);
  border: 2px solid #181818;
}

.foot-right {
  display: flex;
  align-items: center;
  padding-left: 12px;
  gap: 27px;
}

.zoom {
  width: 92px;
  height: 26px;
  appearance: none;
}

.zoom::-webkit-slider-runnable-track {
  height: 10px;
  background: #262626;
  border: 3px solid #0e0e0e;
}

.zoom::-webkit-slider-thumb {
  appearance: none;
  width: 16px;
  height: 20px;
  margin-top: -9px;
  background: #484848;
  clip-path: polygon(50% 0, 100% 35%, 100% 100%, 0 100%, 0 35%);
}

.foot-scroll {
  flex: 1;
  display: flex;
  align-items: center;
  align-self: stretch;
  margin-left: -20px;
  padding-left: 10px;
  gap: 16px;
  background: #272727;
  border-left: 2px solid #141414;
}

.foot-thumb {
  flex: 1;
  align-self: stretch;
  background: #363636;
  border: 2px solid #0e0e0e;
  border-right: 0;
}

.cursor {
  position: absolute;
  top: 763px;
  left: 1px;
}
```
